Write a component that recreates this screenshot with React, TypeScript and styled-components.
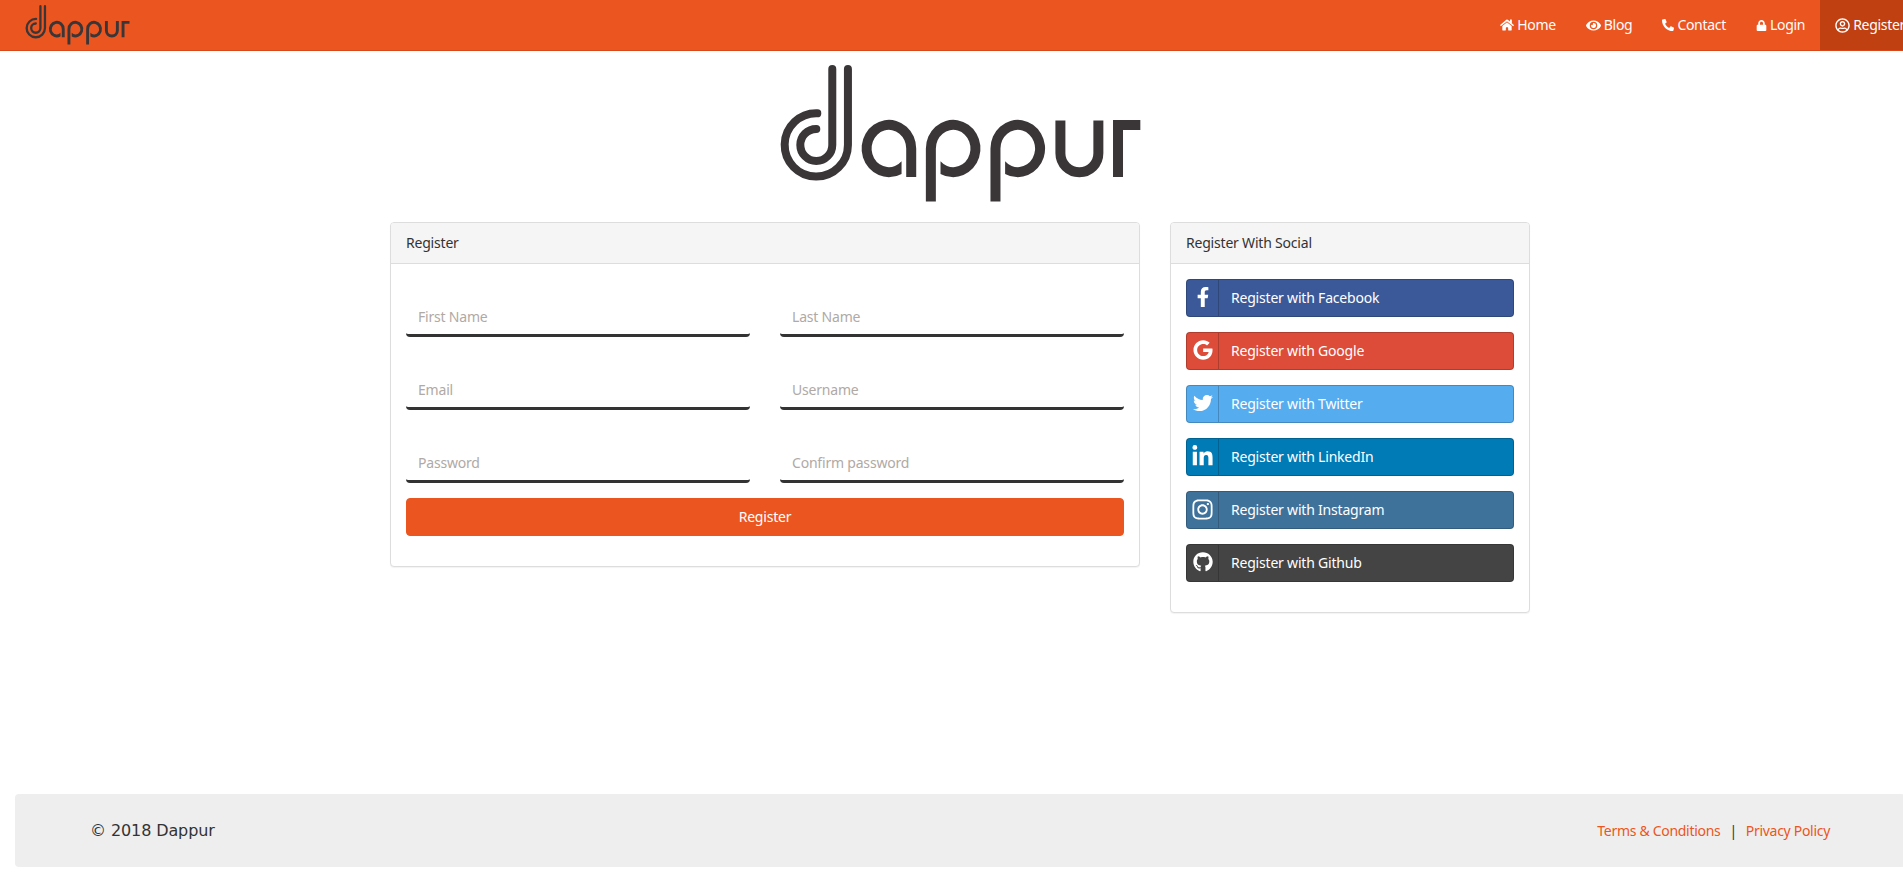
import React from "react";
import styled, { createGlobalStyle } from "styled-components";
import {
  FaHome,
  FaEye,
  FaPhone,
  FaLock,
  FaRegUserCircle,
  FaFacebookF,
  FaGoogle,
  FaTwitter,
  FaLinkedinIn,
  FaInstagram,
  FaGithub,
} from "react-icons/fa";

const GlobalStyle = createGlobalStyle`
  * { box-sizing: border-box; }
  html, body { margin: 0; padding: 0; overflow: hidden; background: #fff; }
  body {
    font-family: "Noto Sans", "Open Sans", sans-serif;
    font-size: 14px;
    line-height: 20px;
    color: #333;
  }
`;

const Page = styled.div`
  width: 1920px;
  min-height: 877px;
  display: flex;
  flex-direction: column;
`;

const Navbar = styled.nav`
  height: 51px;
  background: #eb5520;
  border-bottom: 1px solid #d9481a;
  display: flex;
  justify-content: space-between;
`;

const Brand = styled.a`
  display: block;
  padding: 5px 0 0 25px;
`;

const NavList = styled.div`
  display: flex;
`;

const NavItem = styled.a<{ $active?: boolean }>`
  display: flex;
  align-items: center;
  gap: 3px;
  height: 50px;
  padding: 0 15px;
  color: #fff;
  font-size: 14px;
  letter-spacing: -0.3px;
  background: ${(p) => (p.$active ? "#c04012" : "transparent")};
`;

const PhoneIcon = styled(FaPhone)`
  transform: scaleX(-1);
`;

const LogoSvg = styled.svg<{ $width: number }>`
  display: block;
  width: ${(p) => p.$width}px;
  height: auto;
  fill: none;
  stroke: #3a3637;
`;

const LogoShape = styled.path`
  fill: #3a3637;
  stroke: none;
`;

const Hero = styled.div`
  display: flex;
  justify-content: center;
  padding: 14px 0 19px;
`;

const Content = styled.main`
  width: 1140px;
  margin: 0 auto;
  display: grid;
  grid-template-columns: 750px 360px;
  column-gap: 30px;
  align-items: start;
`;

const Panel = styled.section`
  border: 1px solid #ddd;
  border-radius: 4px;
  background: #fff;
  box-shadow: 0 1px 1px rgba(0, 0, 0, 0.05);
`;

const PanelHeading = styled.div`
  padding: 10px 15px;
  height: 41px;
  background: #f5f5f5;
  border-bottom: 1px solid #ddd;
  border-radius: 3px 3px 0 0;
  letter-spacing: -0.2px;
`;

const PanelBody = styled.div`
  padding: 15px;
`;

const FieldGrid = styled.div`
  display: grid;
  grid-template-columns: 1fr 1fr;
  gap: 15px 30px;
  margin-bottom: 15px;
`;

const Field = styled.input`
  display: block;
  width: 100%;
  height: 58px;
  padding: 22px 12px 3px;
  border: 0;
  border-bottom: 3px solid #333;
  border-radius: 4px;
  outline: 0;
  background: transparent;
  font: inherit;
  letter-spacing: -0.2px;
  &::placeholder {
    color: #b0a9a5;
    opacity: 1;
  }
`;

const SubmitButton = styled.button`
  display: block;
  width: 100%;
  height: 38px;
  margin-bottom: 15px;
  border: 1px solid #eb5520;
  border-radius: 4px;
  background: #eb5520;
  color: #fff;
  font: inherit;
  letter-spacing: -0.2px;
`;

const SocialButton = styled.a<{ $bg: string }>`
  display: flex;
  align-items: center;
  height: 38px;
  margin-bottom: 15px;
  border: 1px solid rgba(0, 0, 0, 0.2);
  border-radius: 4px;
  background: ${(p) => p.$bg};
  color: #fff;
  letter-spacing: -0.2px;
`;

const SocialIcon = styled.span`
  flex: none;
  display: flex;
  align-items: center;
  justify-content: center;
  width: 32px;
  height: 100%;
  margin-right: 12px;
  padding-bottom: 2px;
  border-right: 1px solid rgba(0, 0, 0, 0.2);
`;

const Footer = styled.footer`
  height: 73px;
  margin: auto 15px 10px;
  padding: 0 75px;
  display: flex;
  align-items: center;
  justify-content: space-between;
  background: #eee;
  border-radius: 4px;
`;

const Copyright = styled.span`
  font-family: "DejaVu Sans", sans-serif;
  font-size: 16px;
  letter-spacing: -0.1px;
`;

const FooterLinks = styled.div`
  display: flex;
  gap: 9px;
  letter-spacing: -0.3px;
`;

const FooterLink = styled.a`
  color: #eb5520;
`;

// the p bowl stops in a vertical cut just short of its stem
const pShape =
  "M496 455V296A82 86 0 1 1 540 372L540 334A52 56 0 1 0 526 296V455Z";

const Logo = ({ width }: { width: number }) => (
  <LogoSvg $width={width} viewBox="55 45 1090 415">
    <g strokeWidth={24} strokeLinecap="round">
      <path d="M262 57V285A95 95 0 1 1 170 190" />
      <path d="M215 57V285A48 48 0 1 1 167 237" />
    </g>
    <LogoShape d="M467 381V296A82 86 0 1 0 423 372L423 334A52 56 0 1 1 437 296V381Z" />
    <LogoShape d={pShape} />
    <LogoShape d={pShape} transform="translate(194 0)" />
    <g strokeWidth={30}>
      <path d="M900 212V310A57 57 0 0 0 1014 310V212" />
      <path d="M1073 381V225H1140" />
    </g>
  </LogoSvg>
);

const navItems = [
  { label: "Home", icon: <FaHome size={14} /> },
  { label: "Blog", icon: <FaEye size={15} /> },
  { label: "Contact", icon: <PhoneIcon size={12} /> },
  { label: "Login", icon: <FaLock size={11} /> },
  { label: "Register", icon: <FaRegUserCircle size={15} />, active: true },
];

const fields = [
  "First Name",
  "Last Name",
  "Email",
  "Username",
  "Password",
  "Confirm password",
];

const socials = [
  { name: "Facebook", bg: "#3b5998", icon: <FaFacebookF size={20} /> },
  { name: "Google", bg: "#dd4b39", icon: <FaGoogle size={20} /> },
  { name: "Twitter", bg: "#55acee", icon: <FaTwitter size={20} /> },
  { name: "LinkedIn", bg: "#007bb6", icon: <FaLinkedinIn size={23} /> },
  { name: "Instagram", bg: "#3f729b", icon: <FaInstagram size={23} /> },
  { name: "Github", bg: "#444444", icon: <FaGithub size={20} /> },
];

const App: React.FC = () => (
  <Page>
    <GlobalStyle />
    <Navbar>
      <Brand>
        <Logo width={105} />
      </Brand>
      <NavList>
        {navItems.map((item) => (
          <NavItem key={item.label} $active={item.active}>
            {item.icon}
            {item.label}
          </NavItem>
        ))}
      </NavList>
    </Navbar>
    <Hero>
      <Logo width={363} />
    </Hero>
    <Content>
      <Panel>
        <PanelHeading>Register</PanelHeading>
        <PanelBody>
          <FieldGrid>
            {fields.map((f) => (
              <Field key={f} placeholder={f} />
            ))}
          </FieldGrid>
          <SubmitButton type="button">Register</SubmitButton>
        </PanelBody>
      </Panel>
      <Panel>
        <PanelHeading>Register With Social</PanelHeading>
        <PanelBody>
          {socials.map((s) => (
            <SocialButton key={s.name} $bg={s.bg}>
              <SocialIcon>{s.icon}</SocialIcon>
              Register with {s.name}
            </SocialButton>
          ))}
        </PanelBody>
      </Panel>
    </Content>
    <Footer>
      <Copyright>© 2018 Dappur</Copyright>
      <FooterLinks>
        <FooterLink>Terms &amp; Conditions</FooterLink>
        <span>|</span>
        <FooterLink>Privacy Policy</FooterLink>
      </FooterLinks>
    </Footer>
  </Page>
);

export default App;
